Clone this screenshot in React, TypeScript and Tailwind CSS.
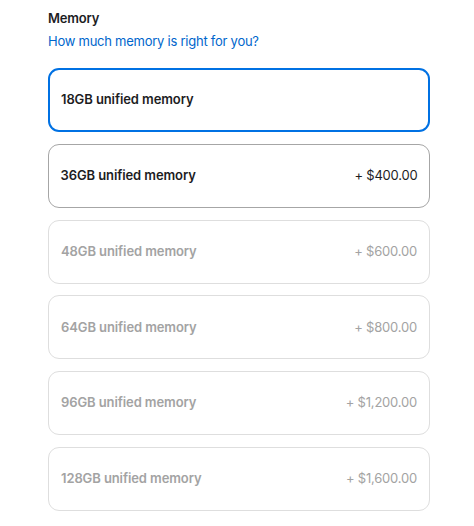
const options = [
  { label: "18GB unified memory", price: "", state: "selected" },
  { label: "36GB unified memory", price: "+ $400.00", state: "normal" },
  { label: "48GB unified memory", price: "+ $600.00", state: "disabled" },
  { label: "64GB unified memory", price: "+ $800.00", state: "disabled" },
  { label: "96GB unified memory", price: "+ $1,200.00", state: "disabled" },
  { label: "128GB unified memory", price: "+ $1,600.00", state: "disabled" },
];

export default function App() {
  return (
    <div className="min-h-[526px] w-[474px] bg-white pl-[48px] pr-[44px] pt-[9px] font-['Inter','Liberation_Sans',sans-serif] antialiased">
      <h2 className="text-[13px] font-semibold leading-[18px] tracking-[-0.2px] text-[#1d1d1f]">Memory</h2>
      <a className="mt-[5px] block text-[13px] leading-[18px] tracking-[-0.25px] text-[#0066cc]">
        How much memory is right for you?
      </a>

      <div className="mt-[18px] flex flex-col gap-[11.75px]">
        {options.map((o) => {
          const border =
            o.state === "selected"
              ? "border-2 border-[#0071e3] px-[11px]"
              : o.state === "normal"
              ? "border-[1.5px] border-[#a6a6a6] px-[11.5px]"
              : "border border-[#dedede] px-[12px]";
          const text = o.state === "disabled" ? "text-[#a3a3a3]" : "text-[#1d1d1f]";
          return (
            <div
              key={o.label}
              className={`flex h-[64px] items-center justify-between rounded-[11px] bg-white ${border}`}
            >
              <span className={`text-[13px] font-semibold tracking-[-0.1px] ${text}`}>{o.label}</span>
              {o.price && <span className={`text-[13px] tracking-[-0.2px] ${text}`}>{o.price}</span>}
            </div>
          );
        })}
      </div>
    </div>
  );
}
